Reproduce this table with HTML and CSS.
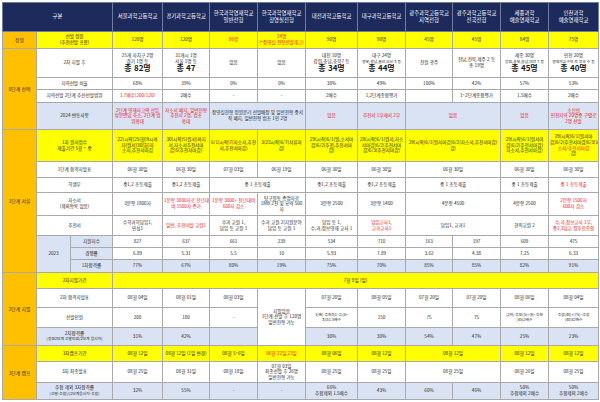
FILE: index.html
```html
<!DOCTYPE html>
<html lang="ko">
<head>
<meta charset="utf-8">
<title>과학고·영재학교 입시 비교</title>
<link rel="stylesheet" href="styles.css">
</head>
<body>
<table class="sheet">
  <colgroup>
    <col class="w34"><col class="w34"><col class="w42">
    <col class="w50"><col class="w47"><col class="w48"><col class="w48"><col class="w52">
    <col class="w48"><col class="w47"><col class="w48"><col class="w48"><col class="w50">
  </colgroup>
  <tr class="h-head">
    <th colspan="3">구분</th>
    <th>서울과학고등학교</th>
    <th>경기과학고등학교</th>
    <th>한국과학영재학교<br>일반전형</th>
    <th>한국과학영재학교<br>장영실전형</th>
    <th>대전과학고등학교</th>
    <th>대구과학고등학교</th>
    <th>광주과학고등학교<br>지역전형</th>
    <th>광주과학고등학교<br>전국전형</th>
    <th>세종과학<br>예술영재학교</th>
    <th>인천과학<br>예술영재학교</th>
  </tr>
  <tr class="h17 y">
    <td class="st">정원</td>
    <td colspan="2">선발 정원<br>(추천선발 포함)</td>
    <td>120명</td><td>120명</td><td class="r">96명</td>
    <td class="r">24명<br>(*장영실 전형선발제고)</td>
    <td>90명</td><td>90명</td><td>45명</td><td>45명</td><td>84명</td><td>75명</td>
  </tr>
  <tr class="h29">
    <td class="st" rowspan="4">0단계 선택</td>
    <td colspan="2">2차 지필 후</td>
    <td>25개 자치구 2명<br>경기 1명 등<br><span class="big">총 82명</span></td>
    <td>31개시 1명<br>서울 1명 등<br><span class="big">총 47</span></td>
    <td>없음</td>
    <td>없음</td>
    <td>대전 10명<br>강원,충남,충북7 등<br><span class="big">총 34명</span></td>
    <td>대구 24명<br><span class="sm">경북,경남,울산,부산 3 등</span><br><span class="big">총 44명</span></td>
    <td>전원 광주</td>
    <td>전남,전북,제주 2 등<br>총 19명</td>
    <td>세종 30명<br><span class="sm">강원,충북,충남,대전 7 등</span><br><span class="big">총 45명</span></td>
    <td>인천 20명<br><span class="sm">경제자유구역 외 전국 수 등</span><br><span class="big">총 40명</span></td>
  </tr>
  <tr class="h12">
    <td colspan="2">지역선발 비율</td>
    <td>68%</td><td>39%</td><td>0%</td><td>0%</td><td>38%</td><td>49%</td><td>100%</td><td>42%</td><td>57%</td><td>53%</td>
  </tr>
  <tr class="h13">
    <td colspan="2">지역선발 2단계 추선선발범위</td>
    <td class="r">1.7배수(200/120)</td><td>2배수</td><td>-</td><td>-</td><td>2배수</td>
    <td>1,2단계종합평가</td><td></td><td>1~2단계종합평가</td><td>1.5배수</td><td>2배수</td>
  </tr>
  <tr class="h27 lv">
    <td colspan="2">2024 변동사항</td>
    <td class="r">2단계 영재사고력 산입<br>방문면담 축소, 2단계 범<br>위확대</td>
    <td class="r">자소서 폐지, 일반전형<br>추천서 2명, 범조<br>확대</td>
    <td colspan="2">장영실전형 정원분리 선발배정 및 일반전형 중서<br>직 폐지, 일반전형 범조 1인 2명</td>
    <td class="r">없음</td>
    <td class="r">추천서 1부에서 2부</td>
    <td colspan="2" class="r">없음</td>
    <td class="r">없음</td>
    <td class="r">소신만<br>인천지역 20명중 구별로<br>2명 선발</td>
  </tr>
  <tr class="h32 y">
    <td class="st" rowspan="8">1단계 서류</td>
    <td colspan="2">1차 원서접수<br>제출기간 5월 ~ 중</td>
    <td>22(시작)25(월)9시까<br>지(원서)30(화)자<br>소서,추천서마감</td>
    <td>30(시작)5(원서)까지<br>서,자소서추천서마<br>감)5(추천서마감)</td>
    <td>6/1(시작)7(자소서,추천<br>서,추천서마감)</td>
    <td>3(23시작)6/7(서류마<br>감)</td>
    <td>29(시작)6/1(원,소서마<br>감)6/2(추천,추천서마<br>감)</td>
    <td>29(시작)6/1(원서,자소<br>서마감)6/2(추천서마<br>감)6/3(추천서마감)</td>
    <td colspan="2">29(시작)6/1(원서마감)6/2(자소서,추천서마감)<br>감)</td>
    <td>29(시작)6/1(원서마<br>감)6/2(추천서마감)<br>자소서,추천서마감)</td>
    <td>29(시작)6/1(원서마<br>감)6/2(추천서마감)6/3(자<br><span class="r">소서/추천서마감</span><br>감)</td>
  </tr>
  <tr class="h16">
    <td colspan="2">1단계 합격자발표</td>
    <td>06월 30일</td><td>06월 30일</td><td>07월 03일</td><td>06월 19일</td><td>06월 30일</td><td>06월 30일</td>
    <td colspan="2">06월 30일</td><td>06월 30일</td><td>06월 30일</td>
  </tr>
  <tr class="h15">
    <td colspan="2">학생부</td>
    <td>중1,2 초등제출</td><td>중1,2 초등제출</td>
    <td colspan="2">중 1 초등제출</td>
    <td>중1,2 초등제출</td><td>중1,2 초등제출</td>
    <td colspan="2">중 1 초등제출</td>
    <td>중 1 초등제출</td><td class="r">중 1 초등제출</td>
  </tr>
  <tr class="h23">
    <td colspan="2">자소서<br>(제외항목 없음)</td>
    <td>3문항 1800자</td>
    <td class="r">1문항 3000자로 전년대<br>비 1500자 증가</td>
    <td class="r">1문항 3000+ 전년대비<br>600자 감소</td>
    <td>탐구활동 증명자료<br>1MB 2천 및 요약 500<br>자</td>
    <td>3문항 2500</td>
    <td>3문항 1400</td>
    <td colspan="2">4문항 4500</td>
    <td>4문항 2500</td>
    <td class="r">2문항 1500자<br>600자 감소</td>
  </tr>
  <tr class="h20">
    <td colspan="2">추천서</td>
    <td>수학과학담임1,<br>인성1</td>
    <td class="r">일반, 추천서발 교원1</td>
    <td>수과 교원 1,<br>담임 등 교원 1</td>
    <td>수과 교원 2(지원분야<br>담임 등 교원 1</td>
    <td>담임 등 1,<br>수,과,정보영재 교사 1</td>
    <td class="r">담임교사1,<br>교과교사1</td>
    <td colspan="2">담임1, 교과1</td>
    <td>현직교원 2</td>
    <td class="r">수,과,정보교사 1부,<br>중1,3담교 정추천종합</td>
  </tr>
  <tr class="h12">
    <td rowspan="3" class="lv">2023</td>
    <td class="lv">지원자수</td>
    <td>827</td><td>637</td><td>661</td><td>239</td><td>534</td><td>710</td><td>163</td><td>197</td><td>609</td><td>475</td>
  </tr>
  <tr class="h12">
    <td class="lv">경쟁률</td>
    <td>6.89</td><td>5.31</td><td>5.5</td><td>10</td><td>5.93</td><td>7.89</td><td>3.62</td><td>4.38</td><td>7.25</td><td>6.33</td>
  </tr>
  <tr class="h13 lv">
    <td>1차합격률</td>
    <td>77%</td><td>67%</td><td>80%</td><td>19%</td><td>75%</td><td>70%</td><td>85%</td><td>85%</td><td>82%</td><td>91%</td>
  </tr>
  <tr class="h16 y">
    <td class="st" rowspan="4">2단계 지필</td>
    <td colspan="2">2차지필기간</td>
    <td colspan="10">7월 9일 (일)</td>
  </tr>
  <tr class="h19">
    <td colspan="2">2차 합격자발표</td>
    <td>08월 04일</td><td>08월 01일</td><td>08월 03일</td>
    <td rowspan="3">지필없음<br>1단계 선발 후 120명<br>일반전형 가능</td>
    <td>07월 20일</td><td>08월 05일</td><td>07월 20일</td><td>07월 20일</td><td>08월 06일</td><td>08월 04일</td>
  </tr>
  <tr class="h20">
    <td colspan="2">선발인원</td>
    <td>200</td><td>180</td><td>-</td>
    <td class="sm">1(배) 추천3(1~2)(0+<br>3(0)1.5배수</td>
    <td>150</td><td>75</td><td>75</td>
    <td class="sm">(2차) 추천(5)+(9)~추천<br>(45)2배수</td>
    <td class="sm">추합(40)+(75)~추합<br>(40)x2배수</td>
  </tr>
  <tr class="h18 lv">
    <td colspan="2">2차합격률<br><span class="sm">(정원2단계 선발인원/2단계 응시자)</span></td>
    <td>31%</td><td>42%</td><td></td>
    <td>30%</td><td>30%</td><td>54%</td><td>47%</td><td>25%</td><td>23%</td>
  </tr>
  <tr class="h16 y">
    <td class="st" rowspan="3">3단계 캠프</td>
    <td colspan="2">3차캠프기간</td>
    <td>08월 12일</td><td>08월 12일 (1일 변경)</td><td>08월 5~6일</td>
    <td class="r">06월 22일,23일</td>
    <td>08월 06일</td><td>08월 12일</td>
    <td colspan="2">08월 12일</td>
    <td>08월 12일</td><td>08월 12일</td>
  </tr>
  <tr class="h21">
    <td colspan="2">3차 최종발표</td>
    <td>08월 25일</td><td>08월 31일</td><td>08월 18일</td>
    <td>07월 03일<br>최종선발 후 26명<br>일반전형 가능</td>
    <td>08월 25일</td><td>08월 25일</td>
    <td colspan="2">08월 25일</td>
    <td>08월 26일</td><td>08월 25일</td>
  </tr>
  <tr class="h17 lv">
    <td colspan="2">추합 제외 3차합격률<br><span class="sm">(선발-추합)/(2단계응시자-추합)</span></td>
    <td>32%</td><td>55%</td><td>-</td><td>-</td>
    <td>66%<br>추합제외 1.5배수</td>
    <td>43%</td><td>60%</td><td>46%</td>
    <td>50%<br>추합제외 2배수</td>
    <td>50%<br>추합제외 2배수</td>
  </tr>
</table>
</body>
</html>
```

FILE: styles.css
```css
html, body {
  margin: 0;
  padding: 0;
  background: #ffffff;
}

body {
  padding: 2px;
  font-family: "Noto Sans CJK KR", "Noto Sans", sans-serif;
}

.sheet {
  border-collapse: collapse;
  table-layout: fixed;
  width: 596px;
  font-size: 4.6px;
  line-height: 1.22;
  color: #262626;
  border: 1px solid #7f7f7f;
}

.w34 { width: 34px; }
.w42 { width: 42px; }
.w47 { width: 47px; }
.w48 { width: 48px; }
.w50 { width: 50px; }
.w52 { width: 52px; }

.sheet td,
.sheet th {
  border: 1px solid #a9a9a9;
  padding: 0 1px;
  text-align: center;
  vertical-align: middle;
  overflow: hidden;
  white-space: nowrap;
}

.sheet th {
  background: #1c2a5c;
  color: #ffffff;
  font-weight: normal;
  font-size: 5.4px;
  line-height: 1.35;
  border-color: #6f7ba0;
}

.h-head { height: 29px; }
.h12 { height: 12px; }
.h13 { height: 13px; }
.h15 { height: 15px; }
.h16 { height: 16px; }
.h17 { height: 17px; }
.h18 { height: 18px; }
.h19 { height: 19px; }
.h20 { height: 20px; }
.h21 { height: 21px; }
.h23 { height: 23px; }
.h27 { height: 27px; }
.h29 { height: 29px; }
.h32 { height: 32px; }

.y td { background: #ffff00; }
.lv td, td.lv { background: #dae3f3; }

.sheet td.st {
  background: #ffc000;
  color: #2a2a2a;
  font-size: 4.8px;
}

.r { color: #e8121a; }

.big {
  font-size: 8px;
  font-weight: 700;
  line-height: 1.1;
  color: #1a1a1a;
}

.sm { font-size: 3.8px; }
```
